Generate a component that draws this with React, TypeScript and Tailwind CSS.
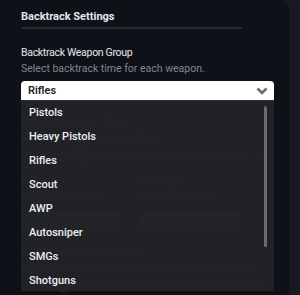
import React from "react";

const weapons = ["Pistols", "Heavy Pistols", "Rifles", "Scout", "AWP", "Autosniper", "SMGs", "Shotguns"];

function Slider({ pos, value }: { pos: number; value?: string }) {
  return (
    <div className="flex flex-col">
      <div className="flex h-[14px] items-center gap-[6px]">
        <span className="w-[8px] text-[13px] leading-none">−</span>
        <div className="relative h-[4px] flex-1 rounded bg-[#1f232c]">
          <div className="absolute -top-[5px] h-[14px] w-[14px] rounded-full bg-[#2c3039]" style={{ left: pos }} />
        </div>
        <span className="w-[8px] text-[13px] leading-none">+</span>
      </div>
      {value && <div className="pl-[56px] text-[11px] leading-[14px]">{value}</div>}
    </div>
  );
}

export default function App() {
  return (
    <div
      className="flex h-[295px] w-[300px] overflow-hidden bg-[#171a24]"
      style={{ fontFamily: "Roboto, 'Noto Sans', sans-serif" }}
    >
      <div className="relative h-full w-[289px] rounded-tr-lg bg-[#0e1118] px-[21px] pt-[10px]">
        <div className="w-[221px] border-b-2 border-[#242831] pb-[3px] text-[11px] font-bold leading-[14px] text-[#e4e6ea]">
          Backtrack Settings
        </div>

        <div className="mt-[16px] text-[10.5px] tracking-[-0.3px] leading-[16px] text-[#e6e8ec]">Backtrack Weapon Group</div>
        <div className="mt-[1px] text-[10.5px] leading-[14px] text-[#80858f]">Select backtrack time for each weapon.</div>

        <div className="mt-[5px] flex h-[20px] w-[253px] items-center justify-between rounded-t bg-white pl-[7px] pr-[6px]">
          <span className="text-[11px] font-semibold text-[#1e1f22]">Rifles</span>
          <svg width="12" height="8" viewBox="0 0 12 8">
            <path d="M1.5 1.5 L6 6 L10.5 1.5" fill="none" stroke="#6b6b6b" strokeWidth="2.6" />
          </svg>
        </div>

        <div className="flex flex-col text-[#35373c]">
          <div className="mt-[13px] text-[11px] leading-[16px]">Rifles Backtrack Time</div>
          <div className="text-[10.5px] leading-[16px]">Change Rifles backtrack time.</div>
          <Slider pos={40} value="80" />
          <div className="mt-[1px] grid grid-cols-[100px_100px] gap-x-[20px]">
            <div className="flex flex-col">
              <span className="text-[11px] leading-[16px]">Decrease</span>
              <span className="text-[10.5px] leading-[16px]">Decrease BT time.</span>
              <div className="mt-[5px] flex h-[20px] items-center justify-center rounded bg-[#2a2b2f] text-[11px]">Left</div>
            </div>
            <div className="flex flex-col">
              <span className="text-[11px] leading-[16px]">Increase</span>
              <span className="text-[10.5px] leading-[16px]">Increase BT time.</span>
              <div className="mt-[5px] flex h-[20px] items-center justify-center rounded bg-[#2a2b2f] text-[11px]">Right</div>
            </div>
          </div>
          <div className="mt-[13px] text-[11px] leading-[16px]">Backtrack Change Value</div>
          <div className="text-[10.5px] leading-[16px]">Set by how much bactrack is increased/decreased.</div>
          <div className="mt-[1px]">
            <Slider pos={21} />
          </div>
        </div>

        <div className="absolute left-[21px] top-[100px] h-[191px] w-[253px] bg-[#232427]/95">
          <div className="flex flex-col pl-[8px] pt-[1px]">
            {weapons.map((w) => (
              <div key={w} className="flex h-[24px] items-center text-[11px] font-medium text-[#eceef2]">
                {w}
              </div>
            ))}
          </div>
          <div className="absolute right-[7px] top-[6px] h-[141px] w-[3px] rounded-full bg-[#6a6b6e]" />
        </div>
      </div>
    </div>
  );
}
